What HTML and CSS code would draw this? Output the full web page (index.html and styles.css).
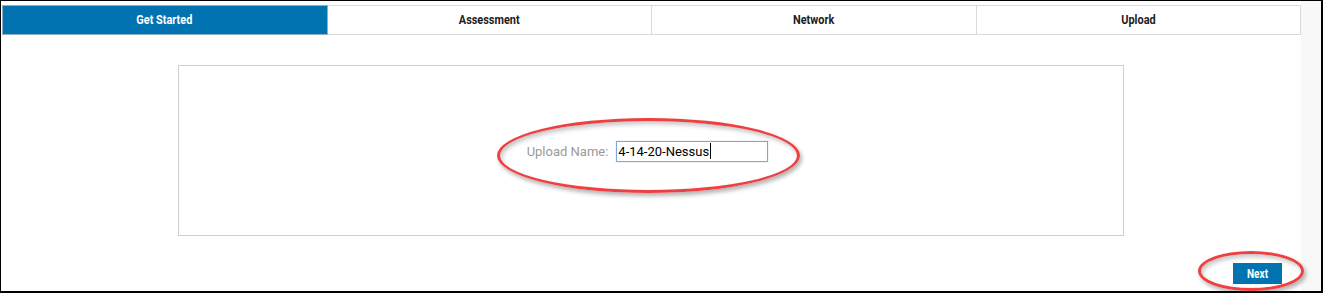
FILE: index.html
```html
<!DOCTYPE html>
<html lang="en">
<head>
  <meta charset="UTF-8">
  <title>Upload Wizard</title>
  <link rel="stylesheet" href="styles.css">
</head>
<body>

  <!-- Screenshot frame -->
  <div class="frame">
    <div class="content">

      <!-- Wizard steps -->
      <div class="steps">
        <div class="step active"><span class="step-text">Get Started</span></div>
        <div class="step"><span class="step-text">Assessment</span></div>
        <div class="step"><span class="step-text">Network</span></div>
        <div class="step"><span class="step-text">Upload</span></div>
      </div>

      <!-- Form panel -->
      <div class="panel">
        <div class="field">
          <label class="field-label">Upload Name:</label>
          <div class="field-input">4-14-20-Nessus<span class="caret"></span></div>
          <span class="callout callout-field"></span>
        </div>
      </div>

      <!-- Actions -->
      <div class="actions">
        <div class="next-wrap">
          <button class="btn-next"><span class="step-text">Next</span></button>
          <span class="callout callout-next"></span>
        </div>
      </div>

    </div>
    <div class="gutter"></div>
  </div>

</body>
</html>
```

FILE: styles.css
```css
/* Page */
html, body {
  margin: 0;
  padding: 0;
  background: white;
  font-family: Roboto, 'Liberation Sans', sans-serif;
}

/* Outer frame of the screenshot */
.frame {
  width: 1320px;
  height: 290px;
  border-top: 1px solid #000;
  border-left: 1px solid #000;
  border-right: 2px solid #000;
  border-bottom: 2px solid #000;
  display: flex;
  overflow: hidden;
}

.content {
  width: 1300px;
  padding-top: 4px;
  position: relative;
}

.gutter {
  flex: 1;
  background: #f8f8f8;
}

/* Steps bar */
.steps {
  display: flex;
  margin-left: 1px;
  width: 1299px;
}

.step {
  flex: 1;
  height: 28px;
  line-height: 28px;
  border: 1px solid #dadada;
  border-left: none;
  text-align: center;
  font-size: 13px;
  font-weight: 700;
  color: #1c1c1c;
}

/* narrow bold face, like the condensed UI font */
.step-text {
  display: inline-block;
  transform: scaleX(0.84);
}

.step:first-child {
  border-left: 1px solid #dadada;
}

.step.active {
  background: #0273b1;
  border-color: #93aec2;
  color: white;
}

/* Panel */
.panel {
  width: 944px;
  height: 169px;
  margin: 30px auto 0;
  border: 1px solid #cfcfcf;
  display: flex;
  justify-content: center;
  align-items: center;
}

.field {
  position: relative;
  display: flex;
  align-items: center;
  gap: 8px;
  margin-right: 7px;
  margin-top: 1px;
}

.field-label {
  font-size: 13px;
  color: #9a9a9a;
}

.field-input {
  width: 148px;
  height: 19px;
  line-height: 19px;
  padding: 0 1px;
  border: 1px solid #7da6df;
  box-shadow: 0 0 1px rgba(90, 140, 220, 0.5);
  font-size: 13px;
  color: #000;
  display: flex;
  align-items: center;
}

.caret {
  display: inline-block;
  width: 1px;
  height: 16px;
  background: #000;
  margin-left: 1px;
}

/* Red annotation ellipses */
.callout {
  position: absolute;
  border: 3px solid #ee4040;
  border-radius: 50%;
  box-shadow: 2px 3px 4px rgba(0, 0, 0, 0.3), inset 2px 3px 4px rgba(0, 0, 0, 0.22);
  pointer-events: none;
}

.callout-field {
  left: -30px;
  top: -23px;
  width: 297px;
  height: 69px;
}

/* Actions */
.actions {
  display: flex;
  justify-content: flex-end;
  padding-right: 19px;
  margin-top: 27px;
}

.next-wrap {
  position: relative;
}

.btn-next {
  width: 49px;
  height: 21px;
  padding: 0;
  border: none;
  background: #0273b1;
  color: white;
  font-family: Roboto, 'Liberation Sans', sans-serif;
  font-size: 12px;
  font-weight: 700;
  display: block;
}

.callout-next {
  left: -35px;
  top: -12px;
  width: 100px;
  height: 34px;
  z-index: 5;
}
```
